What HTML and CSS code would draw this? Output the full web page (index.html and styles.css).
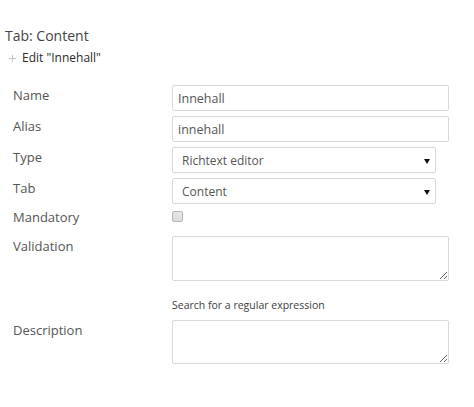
FILE: index.html
```html
<!DOCTYPE html>
<html lang="en">
<head>
<meta charset="utf-8">
<title>Edit property</title>
<link rel="stylesheet" href="styles.css">
</head>
<body>
<div class="page">
  <h1 class="tab-title">Tab: Content</h1>
  <div class="edit-line">
    <svg class="plus" width="7" height="7" viewBox="0 0 7 7"><path d="M3.5 0v7M0 3.5h7" stroke="#c4c4c4" stroke-width="1"/></svg>
    <span>Edit "Innehall"</span>
  </div>
  <form class="form">
    <div class="row row-field">
      <label class="label">Name</label>
      <input class="text-input" type="text" value="Innehall">
    </div>
    <div class="row row-field">
      <label class="label">Alias</label>
      <input class="text-input" type="text" value="innehall">
    </div>
    <div class="row row-field">
      <label class="label">Type</label>
      <div class="select"><span>Richtext editor</span><i class="caret"></i></div>
    </div>
    <div class="row row-field">
      <label class="label">Tab</label>
      <div class="select"><span>Content</span><i class="caret"></i></div>
    </div>
    <div class="row row-check">
      <label class="label">Mandatory</label>
      <span class="checkbox"></span>
    </div>
    <div class="row row-validation">
      <label class="label">Validation</label>
      <div class="control">
        <textarea class="textarea"></textarea>
        <div class="help">Search for a regular expression</div>
      </div>
    </div>
    <div class="row row-description">
      <label class="label">Description</label>
      <textarea class="textarea"></textarea>
    </div>
  </form>
</div>
</body>
</html>
```
FILE: styles.css
```css
* { box-sizing: border-box; }
html, body { margin: 0; padding: 0; background: #fff; }
body {
  font-family: "Open Sans", "Liberation Sans", sans-serif;
  color: #4d4d4d;
}
.page { width: 474px; height: 407px; overflow: hidden; }
.tab-title {
  margin: 26px 0 0 5px;
  font-size: 14px;
  line-height: 20px;
  font-weight: 400;
  color: #444;
}
.edit-line {
  margin: 3px 0 0 9px;
  display: flex;
  align-items: center;
  gap: 6px;
  font-size: 12px;
  line-height: 18px;
  color: #2a2a2a;
}
.plus { display: block; margin-top: 1px; }
.form { margin: 18px 0 0 13px; }
.row {
  display: grid;
  grid-template-columns: 159px 277px;
  align-items: start;
}
.row-field { margin-bottom: 5px; }
.row-check { margin-top: -2px; height: 20px; }
.row-validation { margin-top: 9px; }
.row-description { margin-top: 7px; }
.label {
  font-size: 13px;
  line-height: 20px;
  color: #555;
}
.text-input {
  width: 277px;
  height: 26px;
  margin: 0;
  padding: 0 5px;
  border: 1px solid #d9d9d9;
  border-radius: 2px;
  font-family: inherit;
  font-size: 12.5px;
  color: #555;
  background: #fff;
  outline: none;
}
.select {
  position: relative;
  width: 264px;
  height: 26px;
  padding: 0 9px;
  border: 1px solid #d9d9d9;
  border-radius: 2px;
  display: flex;
  align-items: center;
  font-size: 12px;
  color: #555;
  background: #fff;
}
.caret {
  position: absolute;
  right: 5px;
  top: 11px;
  width: 0;
  height: 0;
  border-left: 3px solid transparent;
  border-right: 3px solid transparent;
  border-top: 5px solid #111;
}
.checkbox {
  display: block;
  width: 11px;
  height: 11px;
  margin-top: 4px;
  border: 1px solid #b5b5b5;
  border-radius: 2px;
  background: linear-gradient(#e9e9e9, #dcdcdc);
}
.control { display: flex; flex-direction: column; }
.textarea {
  display: block;
  width: 277px;
  height: 45px;
  margin: 0;
  padding: 4px 6px;
  border: 1px solid #d9d9d9;
  border-radius: 2px;
  font-family: inherit;
  font-size: 12.5px;
  background: #fff;
  outline: none;
}
.row-description .textarea { height: 44px; }
.help {
  margin-top: 16px;
  font-size: 10.5px;
  line-height: 16px;
  color: #404040;
}
```
